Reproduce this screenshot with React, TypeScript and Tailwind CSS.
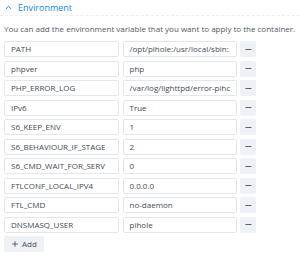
import { ChevronUp, Minus, Plus } from "lucide-react";

// values as far as they show in the narrow fields
const rows: [string, string][] = [
  ["PATH", "/opt/pihole:/usr/local/sbin:"],
  ["phpver", "php"],
  ["PHP_ERROR_LOG", "/var/log/lighttpd/error-pihc"],
  ["IPv6", "True"],
  ["S6_KEEP_ENV", "1"],
  ["S6_BEHAVIOUR_IF_STAGE", "2"],
  ["S6_CMD_WAIT_FOR_SERV", "0"],
  ["FTLCONF_LOCAL_IPV4", "0.0.0.0"],
  ["FTL_CMD", "no-daemon"],
  ["DNSMASQ_USER", "pihole"],
];

function Field({ value }: { value: string }) {
  return (
    <div className="h-4 min-w-0 flex-1 overflow-hidden whitespace-nowrap rounded-[2px] border border-[#e3e7ec] bg-white pl-[6px] text-[8px] leading-[14px] text-[#414b55]">
      {value}
    </div>
  );
}

export default function App() {
  return (
    <div className="h-[256px] w-[300px] bg-white font-['Open_Sans',sans-serif]">
      <div className="flex h-[16px] items-center gap-[5px] border-b border-dashed border-[#eceef1] pl-[4px] text-[#1086e8]">
        <ChevronUp size={9} strokeWidth={2.5} />
        <span className="text-[9px] leading-none">Environment</span>
      </div>
      <p className="px-[4px] pt-[7px] text-[8px] leading-[12px] text-[#505a64]">
        You can add the environment variable that you want to apply to the container.
      </p>
      <div className="mt-[6px] flex flex-col gap-[3.5px] pl-[4px]">
        {rows.map(([k, v]) => (
          <div key={k} className="flex w-[252px] items-center">
            <Field value={k} />
            <div className="w-[4px]" />
            <Field value={v} />
            <button className="ml-[3px] flex h-4 w-4 items-center justify-center rounded-[2px] bg-[#eef1f5] text-[#505a64]">
              <Minus size={9} strokeWidth={2.5} />
            </button>
          </div>
        ))}
        <button className="flex h-4 w-[40px] items-center justify-center gap-[3px] rounded-[2px] bg-[#eef1f5] text-[8px] text-[#414b55]">
          <Plus size={8} strokeWidth={2.5} />
          Add
        </button>
      </div>
    </div>
  );
}
